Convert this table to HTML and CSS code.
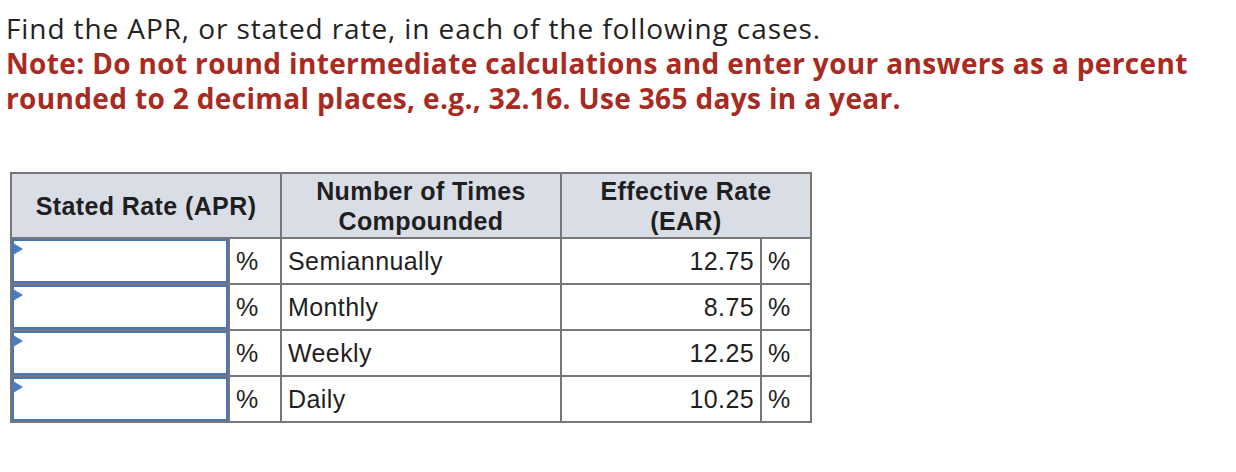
FILE: index.html
```html
<!DOCTYPE html>
<html>
<head>
<meta charset="utf-8">
<link rel="stylesheet" href="styles.css">
</head>
<body>
<div class="question">
  <p class="intro">Find the APR, or stated rate, in each of the following cases.</p>
  <p class="note">Note: Do not round intermediate calculations and enter your answers as a percent<br>rounded to 2 decimal places, e.g., 32.16. Use 365 days in a year.</p>
</div>
<table class="grid">
  <colgroup>
    <col class="c-input">
    <col class="c-pct">
    <col class="c-comp">
    <col class="c-ear">
    <col class="c-pct2">
  </colgroup>
  <thead>
    <tr>
      <th colspan="2">Stated Rate (APR)</th>
      <th>Number of Times<br>Compounded</th>
      <th colspan="2">Effective Rate<br>(EAR)</th>
    </tr>
  </thead>
  <tbody>
    <tr>
      <td class="input-cell"><div class="box"><span class="flag"></span></div></td>
      <td class="pct">%</td>
      <td class="comp">Semiannually</td>
      <td class="num">12.75</td>
      <td class="pct">%</td>
    </tr>
    <tr>
      <td class="input-cell"><div class="box"><span class="flag"></span></div></td>
      <td class="pct">%</td>
      <td class="comp">Monthly</td>
      <td class="num">8.75</td>
      <td class="pct">%</td>
    </tr>
    <tr>
      <td class="input-cell"><div class="box"><span class="flag"></span></div></td>
      <td class="pct">%</td>
      <td class="comp">Weekly</td>
      <td class="num">12.25</td>
      <td class="pct">%</td>
    </tr>
    <tr>
      <td class="input-cell"><div class="box"><span class="flag"></span></div></td>
      <td class="pct">%</td>
      <td class="comp">Daily</td>
      <td class="num">10.25</td>
      <td class="pct">%</td>
    </tr>
  </tbody>
</table>
</body>
</html>
```
FILE: styles.css
```css
html, body {
  margin: 0;
  padding: 0;
  background: #ffffff;
}
body {
  padding: 11px 0 0 6px;
}
.question {
  font-family: "Open Sans", Lato, sans-serif;
  font-size: 28px;
  line-height: 35px;
  white-space: nowrap;
}
.question p {
  margin: 0;
}
.intro {
  color: #222222;
  letter-spacing: 0.9px;
}
.note {
  color: #a82a21;
  font-weight: bold;
  letter-spacing: 0.35px;
}
.grid {
  margin: 56px 0 0 4px;
  border-collapse: collapse;
  border: 2px solid #777777;
  font-family: "Liberation Sans", Arial, sans-serif;
  font-size: 25px;
  letter-spacing: 0.4px;
  color: #1f1f1f;
  table-layout: fixed;
}
.c-input { width: 218px; }
.c-pct { width: 52px; }
.c-comp { width: 280px; }
.c-ear { width: 200px; }
.c-pct2 { width: 50px; }
.grid th {
  background: #d9dde6;
  border: 2px solid #777777;
  font-weight: bold;
  font-size: 25px;
  line-height: 30px;
  height: 63px;
  padding: 0 4px;
  text-align: center;
  vertical-align: middle;
}
.grid td {
  border: 2px solid #777777;
  height: 42px;
  padding: 0 6px;
  vertical-align: middle;
}
.grid td.input-cell {
  padding: 0;
}
.box {
  position: relative;
  height: 40px;
  border: 2px solid #4a74b8;
  background: #ffffff;
}
.flag {
  position: absolute;
  left: -1px;
  top: 2px;
  width: 0;
  height: 0;
  border-top: 6px solid transparent;
  border-bottom: 6px solid transparent;
  border-left: 10px solid #4a7cc4;
}
.pct {
  text-align: left;
}
.comp {
  text-align: left;
}
.num {
  text-align: right;
}
```
